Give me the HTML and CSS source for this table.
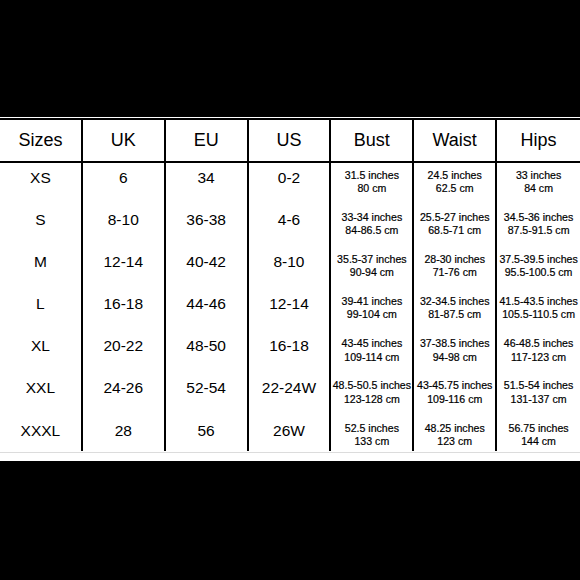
FILE: index.html
```html
<!DOCTYPE html>
<html lang="en">
<head>
<meta charset="utf-8">
<title>Size chart</title>
<link rel="stylesheet" href="styles.css">
</head>
<body>
<div class="page">
  <div class="band-top"></div>
  <div class="sheet">
    <div class="chart">
      <div class="head">
        <div class="cell">Sizes</div>
        <div class="cell">UK</div>
        <div class="cell">EU</div>
        <div class="cell">US</div>
        <div class="cell">Bust</div>
        <div class="cell">Waist</div>
        <div class="cell">Hips</div>
      </div>
      <div class="rows">
        <div class="row">
          <div class="cell">XS</div><div class="cell">6</div><div class="cell">34</div><div class="cell">0-2</div>
          <div class="cell sm">31.5 inches<br>80 cm</div>
          <div class="cell sm">24.5 inches<br>62.5 cm</div>
          <div class="cell sm">33 inches<br>84 cm</div>
        </div>
        <div class="row">
          <div class="cell">S</div><div class="cell">8-10</div><div class="cell">36-38</div><div class="cell">4-6</div>
          <div class="cell sm">33-34 inches<br>84-86.5 cm</div>
          <div class="cell sm">25.5-27 inches<br>68.5-71 cm</div>
          <div class="cell sm">34.5-36 inches<br>87.5-91.5 cm</div>
        </div>
        <div class="row">
          <div class="cell">M</div><div class="cell">12-14</div><div class="cell">40-42</div><div class="cell">8-10</div>
          <div class="cell sm">35.5-37 inches<br>90-94 cm</div>
          <div class="cell sm">28-30 inches<br>71-76 cm</div>
          <div class="cell sm">37.5-39.5 inches<br>95.5-100.5 cm</div>
        </div>
        <div class="row">
          <div class="cell">L</div><div class="cell">16-18</div><div class="cell">44-46</div><div class="cell">12-14</div>
          <div class="cell sm">39-41 inches<br>99-104 cm</div>
          <div class="cell sm">32-34.5 inches<br>81-87.5 cm</div>
          <div class="cell sm">41.5-43.5 inches<br>105.5-110.5 cm</div>
        </div>
        <div class="row">
          <div class="cell">XL</div><div class="cell">20-22</div><div class="cell">48-50</div><div class="cell">16-18</div>
          <div class="cell sm">43-45 inches<br>109-114 cm</div>
          <div class="cell sm">37-38.5 inches<br>94-98 cm</div>
          <div class="cell sm">46-48.5 inches<br>117-123 cm</div>
        </div>
        <div class="row">
          <div class="cell">XXL</div><div class="cell">24-26</div><div class="cell">52-54</div><div class="cell">22-24W</div>
          <div class="cell sm">48.5-50.5 inches<br>123-128 cm</div>
          <div class="cell sm">43-45.75 inches<br>109-116 cm</div>
          <div class="cell sm">51.5-54 inches<br>131-137 cm</div>
        </div>
        <div class="row">
          <div class="cell">XXXL</div><div class="cell">28</div><div class="cell">56</div><div class="cell">26W</div>
          <div class="cell sm">52.5 inches<br>133 cm</div>
          <div class="cell sm">48.25 inches<br>123 cm</div>
          <div class="cell sm">56.75 inches<br>144 cm</div>
        </div>
      </div>
    </div>
    <div class="foot"></div>
  </div>
</div>
</body>
</html>
```
FILE: styles.css
```css
html, body {
  margin: 0;
  padding: 0;
  background: #000;
}
.page {
  width: 580px;
  height: 580px;
  display: flex;
  flex-direction: column;
  font-family: "Liberation Sans", Arial, sans-serif;
  color: #000;
}
.band-top {
  height: 117px;
  flex: none;
}
.sheet {
  background: #fff;
  padding-top: 1px;
  flex: none;
}
.chart {
  border-top: 2px solid #000;
}
.head {
  display: grid;
  grid-template-columns: repeat(7, 1fr);
  height: 41px;
  border-bottom: 2px solid #000;
  font-size: 18px;
}
.head .cell {
  display: flex;
  align-items: center;
  justify-content: center;
}
.rows {
  height: 288px;
  overflow: hidden;
}
.row {
  display: grid;
  grid-template-columns: repeat(7, 1fr);
  height: 42.1px;
  font-size: 15.5px;
  line-height: 18px;
}
.cell {
  box-sizing: border-box;
  border-right: 2px solid #000;
  text-align: center;
  white-space: nowrap;
}
.row .cell {
  padding-top: 6px;
}
.cell:last-child {
  border-right: none;
}
.row .sm {
  font-size: 10.6px;
  line-height: 13.2px;
  padding-top: 6px;
  -webkit-text-stroke: 0.2px #000;
}
.foot {
  margin-top: 1px;
  border-top: 1px solid #dcdcdc;
  height: 8px;
}
```
